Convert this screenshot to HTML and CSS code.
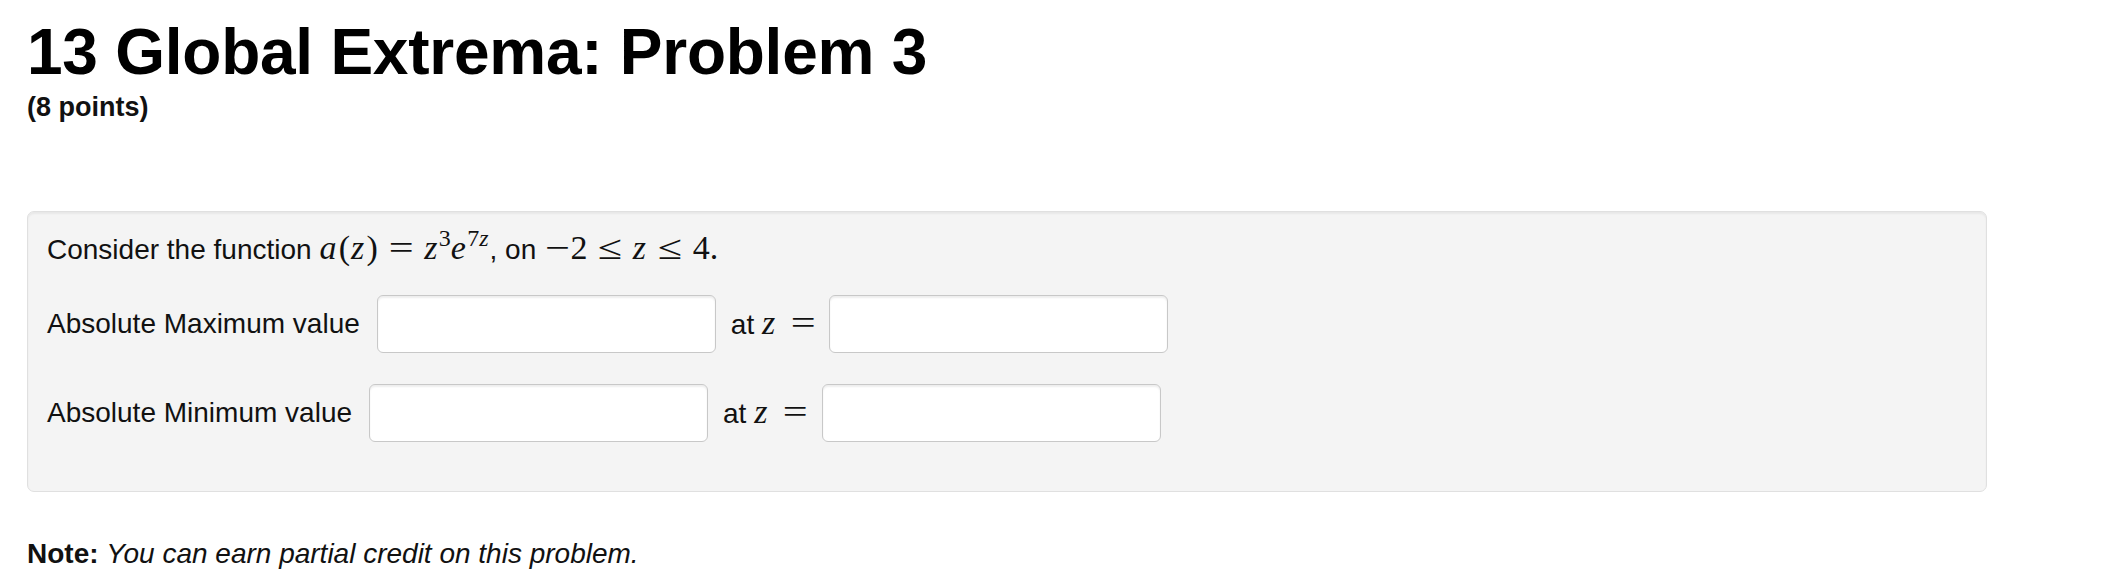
FILE: index.html
```html
<!doctype html>
<html lang="en">
    <head>
        <meta charset="UTF-8" />
        <meta name="viewport" content="width=device-width, initial-scale=1.0" />
        <title>13 Global Extrema: Problem 3</title>
        <link rel="stylesheet" href="styles.css">
    </head>
    <body>
        <div class="container">
            <h1>13 Global Extrema: Problem 3</h1>
            <div class="points">(8 points)</div>

            <div class="problem">
                <p class="statement">
                    Consider the function
                    <span class="math"><i>a</i><span class="paren">(</span><i>z</i><span class="paren">)</span><span class="rel">=</span><i>z</i><sup>3</sup><i>e</i><sup>7<i>z</i></sup></span>,
                    on
                    <span class="math"><span class="minus">&minus;</span>2<span class="rel">&le;</span><i>z</i><span class="rel">&le;</span>4.</span>
                </p>

                <div class="answer-row">
                    <span class="label">Absolute Maximum value</span>
                    <input type="text" class="answer-input" />
                    <span class="label at">at <span class="math"><i>z</i><span class="rel">=</span></span></span>
                    <input type="text" class="answer-input" />
                </div>

                <div class="answer-row">
                    <span class="label">Absolute Minimum value</span>
                    <input type="text" class="answer-input" />
                    <span class="label at">at <span class="math"><i>z</i><span class="rel">=</span></span></span>
                    <input type="text" class="answer-input" />
                </div>
            </div>

            <p class="note"><b>Note:</b> <em>You can earn partial credit on this problem.</em></p>
        </div>
    </body>
</html>
```

FILE: styles.css
```css
* {
    box-sizing: border-box;
}

body {
    margin: 0;
    padding: 0 27px;
    font-family: "Liberation Sans", Arial, Helvetica, sans-serif;
    font-size: 28px;
    line-height: 40px;
    color: #111;
    background: white;
}

.container {
    max-width: 1960px;
}

h1 {
    margin: 16px 0 0;
    font-size: 64px;
    line-height: 72px;
    font-weight: bold;
    letter-spacing: -0.25px;
    color: #000;
}

.points {
    margin-top: 3px;
    font-size: 27px;
    line-height: 32px;
    font-weight: bold;
}

.problem {
    margin-top: 88px;
    padding: 16px 19px 49px;
    background: #f4f4f4;
    border: 1px solid #e0e0e0;
    border-radius: 7px;
    box-shadow: inset 0 2px 2px rgba(0, 0, 0, 0.05);
}

.statement {
    margin: 0 0 25px;
}

.math {
    font-family: "Liberation Serif", "Times New Roman", serif;
    font-size: 34px;
    white-space: nowrap;
}

.math i {
    font-style: italic;
    padding-right: 0.04em;
}

.math sup {
    font-size: 24px;
    line-height: 0;
    vertical-align: 0.55em;
}

.paren {
    display: inline-block;
    width: 0.39em;
    text-align: center;
}

.minus {
    display: inline-block;
    width: 0.778em;
    text-align: center;
    transform: scaleX(1.3);
}

.rel {
    display: inline-block;
    width: 0.778em;
    margin: 0 0.278em;
    text-align: center;
    transform: scaleX(1.3);
}

.label .rel:last-child {
    margin-right: 0;
    transform: scaleX(1.3) translateX(3px);
}

.answer-row {
    display: flex;
    align-items: center;
    gap: 17px;
    margin-bottom: 31px;
}

.answer-row:last-child {
    margin-bottom: 0;
}

.label {
    white-space: nowrap;
}

.label.at {
    margin-left: -2px;
}

.answer-input {
    width: 339px;
    height: 58px;
    margin: 0;
    padding: 6px 10px;
    font-size: 28px;
    background: white;
    border: 1px solid #c8c8c8;
    border-radius: 6px;
    box-shadow: inset 0 2px 2px rgba(0, 0, 0, 0.07);
    outline: none;
}

.note {
    margin: 42px 0 0;
}

.note em {
    font-style: italic;
}
```
